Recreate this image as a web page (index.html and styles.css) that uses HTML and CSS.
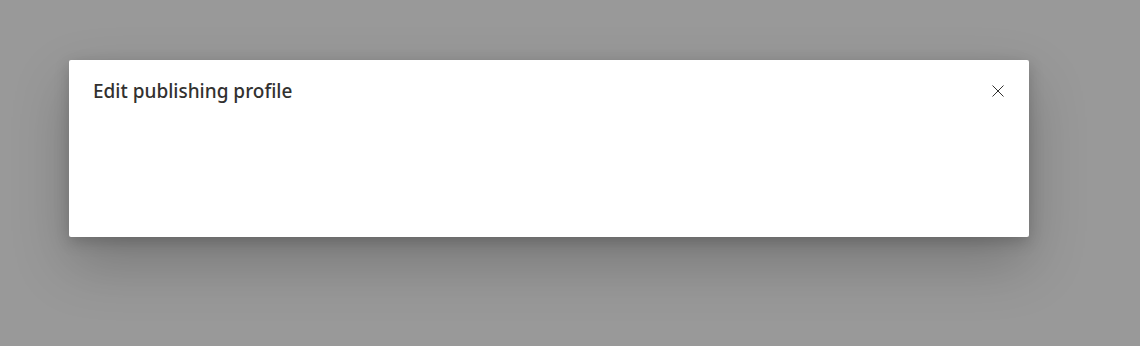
FILE: index.html
```html
<!DOCTYPE html>
<html>
<head>
<meta charset="utf-8">
<link rel="stylesheet" href="styles.css">
</head>
<body>
<div class="overlay">
  <div class="dialog">
    <div class="header">
      <div class="title">Edit publishing profile</div>
      <button class="close" aria-label="Close">
        <svg width="12" height="12" viewBox="0 0 12 12"><path d="M0.5 0.5 L11.5 11.5 M11.5 0.5 L0.5 11.5" stroke="#323130" stroke-width="1" fill="none"/></svg>
      </button>
    </div>
    <div class="body"></div>
  </div>
</div>
</body>
</html>
```
FILE: styles.css
```css
html, body {
  margin: 0;
  padding: 0;
  height: 100%;
}
body {
  background: #999999;
  font-family: "Segoe UI", "Noto Sans", "Open Sans", sans-serif;
}
.overlay {
  display: flex;
  padding: 60px 0 0 69px;
}
.dialog {
  width: 960px;
  height: 177px;
  background: #ffffff;
  border-radius: 2px;
  box-shadow: 0 25.6px 57.6px rgba(0,0,0,0.22), 0 4.8px 14.4px rgba(0,0,0,0.18);
  display: flex;
  flex-direction: column;
}
.header {
  display: flex;
  align-items: flex-start;
  justify-content: space-between;
  padding: 16px 15px 0 24px;
}
.title {
  font-size: 19px;
  font-weight: 500;
  color: #323130;
  line-height: 30px;
  padding-top: 0;
}
.close {
  width: 32px;
  height: 32px;
  border: none;
  background: transparent;
  padding: 0;
  margin-top: -1px;
  display: flex;
  align-items: center;
  justify-content: center;
}
```
